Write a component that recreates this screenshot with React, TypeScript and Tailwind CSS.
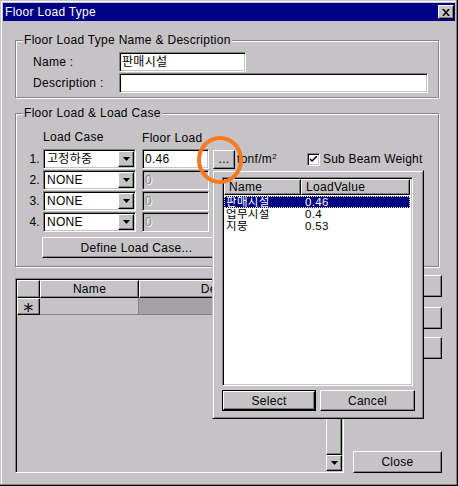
import React from "react";

const raised =
  "border border-t-white border-l-white border-r-black border-b-black shadow-[inset_-1px_-1px_0_#848284]";
const sunken =
  "border border-t-[#848284] border-l-[#848284] border-r-white border-b-white shadow-[inset_1px_1px_0_#000,inset_-1px_-1px_0_#c6c3c6]";
const etched =
  "border border-[#848284] shadow-[1px_1px_0_#fff,inset_1px_1px_0_#fff]";

function DownArrow() {
  return (
    <svg width="7" height="4" viewBox="0 0 7 4">
      <path d="M0 0h7L3.5 4z" fill="#000" />
    </svg>
  );
}

function Combo({ value }: { value: string }) {
  return (
    <div className={`flex h-[20px] w-[93px] items-center bg-white p-[1px] ${sunken}`}>
      <span className="flex-1 pl-[2px] leading-none">{value}</span>
      <div className={`flex h-[16px] w-[16px] items-center justify-center bg-[#c6c3c6] ${raised}`}>
        <DownArrow />
      </div>
    </div>
  );
}

function LoadInput({ value, disabled }: { value: string; disabled?: boolean }) {
  return (
    <div
      className={`flex h-[20px] w-[67px] items-center px-[2px] ${sunken} ${
        disabled ? "bg-[#c6c3c6] text-[#848284] [text-shadow:1px_1px_0_#fff]" : "bg-white"
      }`}
    >
      {value}
    </div>
  );
}

function Group({
  title,
  className,
  children,
}: {
  title: string;
  className: string;
  children: React.ReactNode;
}) {
  return (
    <div className={`relative w-[424px] ${etched} ${className}`}>
      <span className="absolute -top-[8px] left-[7px] bg-[#c6c3c6] px-[1px] leading-[14px]">
        {title}
      </span>
      {children}
    </div>
  );
}

const loadRows = [
  { n: "1.", c: "고정하중", v: "0.46" },
  { n: "2.", c: "NONE", v: "0" },
  { n: "3.", c: "NONE", v: "0" },
  { n: "4.", c: "NONE", v: "0" },
];

const listItems = [
  { name: "판매시설", v: "0.46" },
  { name: "업무시설", v: "0.4" },
  { name: "지붕", v: "0.53" },
];

export default function App() {
  return (
    <div className="relative h-[486px] w-[458px] bg-[#c6c3c6] p-[3px] font-['Liberation_Sans','Noto_Sans_CJK_KR',sans-serif] text-[12px] tracking-[0.3px] text-black shadow-[inset_-1px_-1px_0_#000,inset_-2px_-2px_0_#848284,inset_1px_1px_0_#c6c3c6,inset_2px_2px_0_#fff]">
      {/* title bar */}
      <div className="flex h-[18px] w-[452px] items-center justify-between bg-[#000084] pl-[2px] pr-[1px] text-white">
        <span>Floor Load Type</span>
        <div className={`flex h-[14px] w-[16px] items-center justify-center bg-[#c6c3c6] ${raised}`}>
          <svg width="8" height="7" viewBox="0 0 8 7">
            <path d="M0 0h2l2 2.5L6 0h2L5 3.5 8 7H6L4 4.5 2 7H0l3-3.5z" fill="#000" />
          </svg>
        </div>
      </div>

      <div className="pl-[12px]">
        {/* name & description */}
        <Group title="Floor Load Type Name & Description" className="mt-[19px] h-[58px] pl-[17px] pt-[11px]">
          <div className="flex flex-col gap-[1px]">
            <div className="flex h-[20px] items-center">
              <span className="w-[86px]">Name :</span>
              <div className={`flex h-[20px] w-[127px] items-center bg-white px-[2px] ${sunken}`}>판매시설</div>
            </div>
            <div className="flex h-[20px] items-center">
              <span className="w-[86px]">Description :</span>
              <div className={`h-[20px] w-[309px] bg-white ${sunken}`} />
            </div>
          </div>
        </Group>

        {/* load & load case */}
        <Group title="Floor Load & Load Case" className="mt-[15px] h-[154px] pt-[16px]">
          <div className="flex h-[14px] items-center pl-[27px]">
            <span className="w-[99px]">Load Case</span>
            <span className="pt-[2px]">Floor Load</span>
          </div>
          <div className="mt-[5px] flex flex-col gap-[1px]">
            {loadRows.map((r, i) => (
              <div key={r.n} className="flex h-[20px] items-center pl-[10px]">
                <span className="w-[17px] pr-[3px] text-right">{r.n}</span>
                <Combo value={r.c} />
                <div className="ml-[6px]">
                  <LoadInput value={r.v} disabled={i > 0} />
                </div>
                {i === 0 && (
                  <>
                    <div className={`ml-[4px] flex h-[19px] w-[22px] items-center justify-center bg-[#c6c3c6] leading-none ${raised}`}>
                      ...
                    </div>
                    <span className="ml-[2px] w-[70px]">
                      tonf/m<sup className="text-[8px]">2</sup>
                    </span>
                    <div className={`flex h-[13px] w-[13px] items-center justify-center bg-white ${sunken}`}>
                      <svg width="7" height="7" viewBox="0 0 7 7">
                        <path d="M0 2l2 2 5-5v2L2 6 0 4z" fill="#000" />
                      </svg>
                    </div>
                    <span className="ml-[3px] tracking-[0.2px]">Sub Beam Weight</span>
                  </>
                )}
              </div>
            ))}
          </div>
          <div className={`ml-[26px] mt-[5px] flex h-[21px] w-[189px] items-center justify-center bg-[#c6c3c6] ${raised}`}>
            Define Load Case...
          </div>
        </Group>

        {/* grid + buttons */}
        <div className="mt-[8px] flex items-start">
          <div className={`mt-[3px] flex h-[195px] w-[329px] bg-[#c6c3c6] p-[1px] ${sunken}`}>
            <div className="flex-1">
              <div className="flex h-[18px]">
                <div className={`w-[23px] bg-[#c6c3c6] ${raised}`} />
                <div className={`flex w-[99px] items-center justify-center bg-[#c6c3c6] ${raised}`}>Name</div>
                <div className={`flex flex-1 items-center justify-center bg-[#c6c3c6] ${raised}`}>Description</div>
              </div>
              <div className="flex h-[17px]">
                <div className={`flex w-[23px] items-start justify-center bg-[#c6c3c6] pt-[1px] font-['DejaVu_Sans',sans-serif] text-[20px] leading-none ${raised}`}>*</div>
                <div className="w-[99px] border-b border-r border-[#848284] bg-[#c6c3c6]" />
                <div className="flex-1 border-b border-[#848284] bg-[#a5a2a5]" />
              </div>
            </div>
            <div className="flex w-[16px] flex-col">
              <div className={`h-[16px] bg-[#c6c3c6] ${raised}`} />
              <div className={`flex-1 bg-[#c6c3c6] ${raised}`} />
              <div className={`flex h-[16px] items-center justify-center bg-[#c6c3c6] ${raised}`}>
                <DownArrow />
              </div>
            </div>
          </div>
          <div className="ml-[9px] flex h-[198px] flex-col">
            <div className={`h-[22px] w-[89px] bg-[#c6c3c6] ${raised}`} />
            <div className={`mt-[10px] h-[22px] w-[89px] bg-[#c6c3c6] ${raised}`} />
            <div className={`mt-[8px] h-[22px] w-[89px] bg-[#c6c3c6] ${raised}`} />
            <div className={`mt-auto flex h-[22px] w-[89px] items-center justify-center bg-[#c6c3c6] ${raised}`}>
              Close
            </div>
          </div>
        </div>
      </div>

      {/* load type picker popup */}
      <div className="absolute left-[212px] top-[170px] flex h-[249px] w-[212px] flex-col border border-t-[#c6c3c6] border-l-[#c6c3c6] border-r-black border-b-black bg-[#c6c3c6] pl-[9px] pt-[6px] shadow-[inset_1px_1px_0_#fff,inset_-1px_-1px_0_#848284]">
        <div className={`flex h-[209px] w-[191px] flex-col bg-white p-[1px] ${sunken}`}>
          <div className="flex h-[16px]">
            <div className={`flex w-[77px] items-center bg-[#c6c3c6] pl-[4px] ${raised}`}>Name</div>
            <div className={`flex w-[109px] items-center bg-[#c6c3c6] pl-[4px] ${raised}`}>LoadValue</div>
          </div>
          <div className="flex flex-col pt-[1px] text-[11.5px]">
            {listItems.map((it, i) => (
              <div
                key={it.name}
                className={`flex h-[12px] w-[186px] items-center overflow-hidden leading-[12px] ${
                  i === 0 ? "border border-dotted border-[#ffff80] bg-[#000084] text-white" : "border border-transparent"
                }`}
              >
                <span className="w-[80px] pl-[1px]">{it.name}</span>
                <span>{it.v}</span>
              </div>
            ))}
          </div>
        </div>
        <div className="mt-[4px] flex gap-[4px]">
          <div className="h-[21px] w-[94px] border border-black">
            <div className={`flex h-full items-center justify-center bg-[#c6c3c6] ${raised}`}>Select</div>
          </div>
          <div className={`flex h-[21px] w-[95px] items-center justify-center bg-[#c6c3c6] ${raised}`}>Cancel</div>
        </div>
      </div>

      {/* annotation circle */}
      <svg className="absolute left-[196px] top-[135px]" width="48" height="50" viewBox="0 0 48 50">
        <ellipse cx="24" cy="25" rx="21" ry="22" fill="none" stroke="#f7791e" strokeWidth="4" />
      </svg>
    </div>
  );
}
